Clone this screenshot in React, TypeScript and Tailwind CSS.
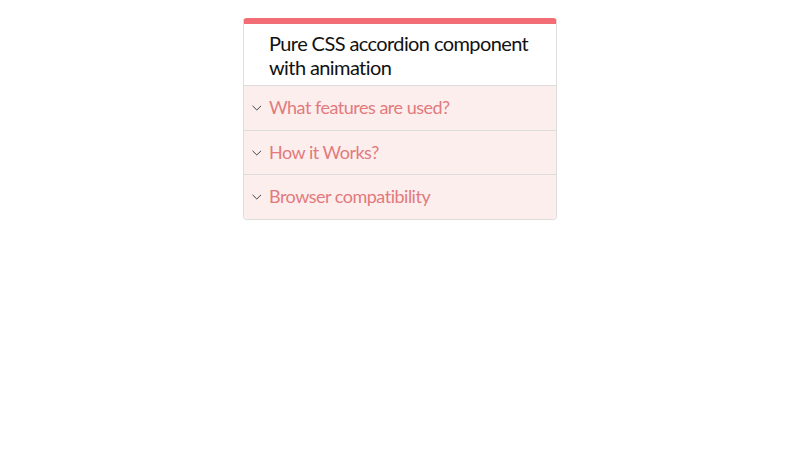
const items = ['What features are used?', 'How it Works?', 'Browser compatibility'];

function Chevron() {
  return (
    <svg width="10" height="6" viewBox="0 0 10 6" className="mt-[1px] shrink-0">
      <polyline points="0.5,0.8 4.8,5 9.1,0.8" fill="none" stroke="#444" strokeWidth="1" />
    </svg>
  );
}

function AccordionItem({ label }: { label: string }) {
  return (
    <div className="flex h-[44.5px] items-center gap-[7px] border-t border-[#ddd] bg-[#fdeeee] pl-[8px]">
      <Chevron />
      <span className="text-[18px] tracking-[-0.5px] text-[#e27a7c]">{label}</span>
    </div>
  );
}

export default function App() {
  return (
    <div className="flex min-h-[450px] justify-center bg-white pt-[18px] font-['Lato',sans-serif]">
      <div className="h-fit w-[314px] overflow-hidden rounded-[4px] border-x border-b border-[#ddd] border-t-[6px] border-t-[#f26d75]">
        <div className="px-[25px] pt-[7px] pb-[6px] text-[20px] leading-[24px] tracking-[-0.6px] text-[#111]">
          Pure CSS accordion component with animation
        </div>
        {items.map((label) => (
          <AccordionItem key={label} label={label} />
        ))}
      </div>
    </div>
  );
}
